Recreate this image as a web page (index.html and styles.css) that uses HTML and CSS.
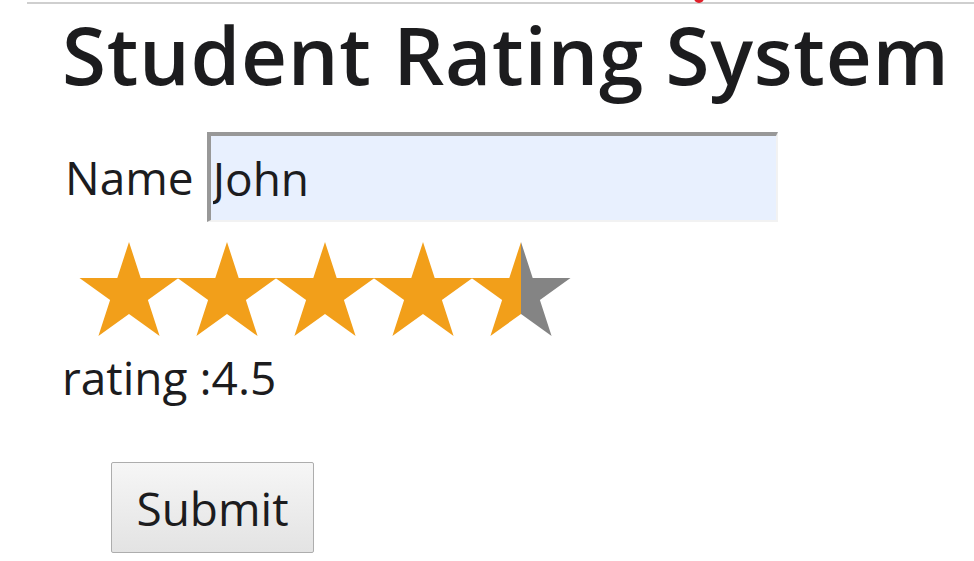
FILE: index.html
```html
<!DOCTYPE html>
<html lang="en">
<head>
<meta charset="utf-8">
<title>Student Rating System</title>
<link rel="stylesheet" href="styles.css">
</head>
<body>
<div class="topbar"><span class="top-marker"></span></div>
<main class="page">
  <h1 class="title">Student Rating System</h1>
  <div class="name-row">
    <label class="name-label" for="name">Name</label>
    <input class="name-input" id="name" type="text" value="John">
  </div>
  <div class="stars">
    <svg class="star" viewBox="0 0 98 95" width="98" height="95"><polygon class="full" points="49,0 60.7,35.9 98.5,35.9 67.9,58.1 79.6,94.1 49,71.9 18.4,94.1 30.1,58.1 -0.5,35.9 37.3,35.9"/></svg>
    <svg class="star" viewBox="0 0 98 95" width="98" height="95"><polygon class="full" points="49,0 60.7,35.9 98.5,35.9 67.9,58.1 79.6,94.1 49,71.9 18.4,94.1 30.1,58.1 -0.5,35.9 37.3,35.9"/></svg>
    <svg class="star" viewBox="0 0 98 95" width="98" height="95"><polygon class="full" points="49,0 60.7,35.9 98.5,35.9 67.9,58.1 79.6,94.1 49,71.9 18.4,94.1 30.1,58.1 -0.5,35.9 37.3,35.9"/></svg>
    <svg class="star" viewBox="0 0 98 95" width="98" height="95"><polygon class="full" points="49,0 60.7,35.9 98.5,35.9 67.9,58.1 79.6,94.1 49,71.9 18.4,94.1 30.1,58.1 -0.5,35.9 37.3,35.9"/></svg>
    <svg class="star" viewBox="0 0 98 95" width="98" height="95">
      <defs>
        <linearGradient id="half" x1="0" y1="0" x2="1" y2="0">
          <stop offset="0.5" stop-color="#f29f1a"/>
          <stop offset="0.5" stop-color="#848484"/>
        </linearGradient>
      </defs>
      <polygon fill="url(#half)" points="49,0 60.7,35.9 98.5,35.9 67.9,58.1 79.6,94.1 49,71.9 18.4,94.1 30.1,58.1 -0.5,35.9 37.3,35.9"/>
    </svg>
  </div>
  <p class="rating">rating :4.5</p>
  <button class="submit" type="button">Submit</button>
</main>
</body>
</html>
```

FILE: styles.css
```css
html, body {
  margin: 0;
  padding: 0;
  background: #ffffff;
}

body {
  font-family: "Open Sans", "Noto Sans", sans-serif;
  color: #1c1c1e;
}

.topbar {
  position: relative;
  margin-left: 27px;
  height: 2px;
  border-bottom: 2px solid #cfcfcf;
}

.top-marker {
  position: absolute;
  left: 667px;
  top: -4px;
  width: 10px;
  height: 7px;
  border-radius: 0 0 6px 6px;
  background: #e0202a;
}

.page {
  padding-left: 62px;
}

.title {
  margin: 2px 0 0 0;
  font-size: 80px;
  font-weight: 600;
  line-height: 96px;
  letter-spacing: 0.7px;
}

.name-row {
  display: flex;
  align-items: center;
  margin-top: 30px;
}

.name-label {
  font-size: 46px;
  line-height: 90px;
  margin-right: 13px;
  padding-left: 3px;
}

.name-input {
  box-sizing: border-box;
  width: 571px;
  height: 90px;
  margin: 0;
  padding: 0 0 0 2px;
  font-family: inherit;
  font-size: 46px;
  color: #1c1c1e;
  background: #e8f0fe;
  border-style: solid;
  border-width: 4px 2px 2px 4px;
  border-color: #989898 #f2f2f2 #f2f2f2 #989898;
  outline: none;
}

.stars {
  display: flex;
  margin: 20px 0 0 18px;
}

.star {
  display: block;
  overflow: visible;
}

.star .full {
  fill: #f29f1a;
}

.rating {
  margin: 10px 0 0 0;
  font-size: 46px;
  line-height: 60px;
}

.submit {
  display: block;
  box-sizing: border-box;
  width: 203px;
  height: 91px;
  margin: 55px 0 0 49px;
  padding: 0;
  font-family: inherit;
  font-size: 46px;
  color: #1c1c1e;
  border: 1px solid #adadad;
  border-radius: 2px;
  background: linear-gradient(#f6f6f6, #e3e3e3);
}
```
